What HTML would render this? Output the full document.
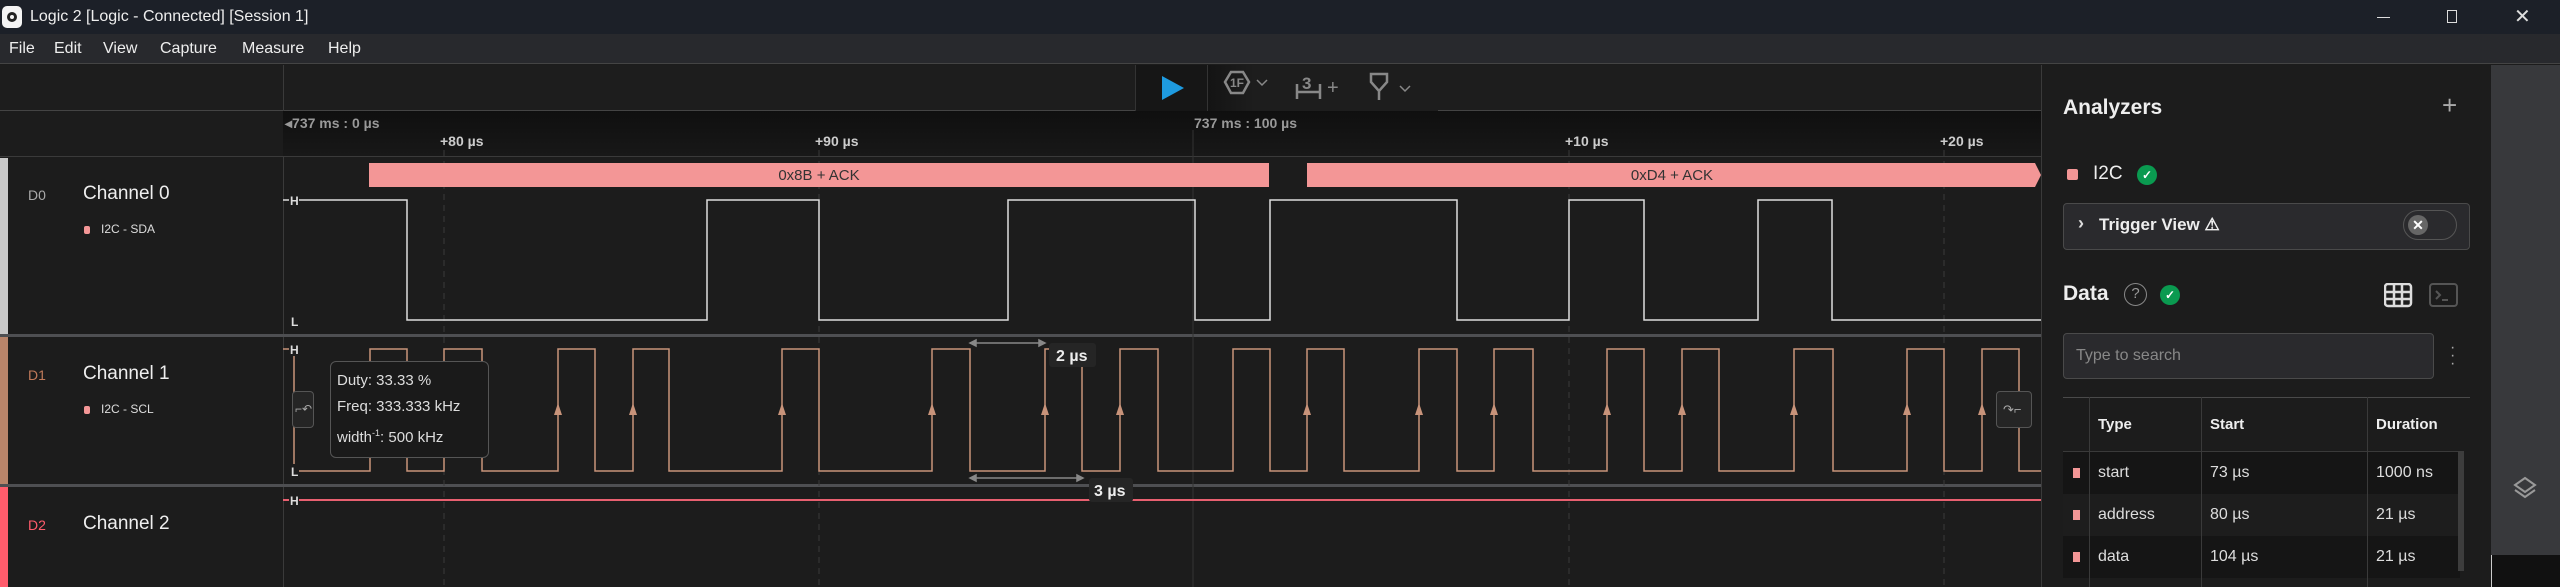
<!DOCTYPE html>
<html><head><meta charset="utf-8"><style>
*{margin:0;padding:0;box-sizing:border-box}
body{width:2560px;height:587px;overflow:hidden;background:#1c1c1c;font-family:"Liberation Sans",sans-serif;color:#ddd;position:relative}
.a{position:absolute;white-space:nowrap}
</style></head><body>
<!-- title bar -->
<div class="a" style="left:0;top:0;width:2560px;height:34px;background:#1c2028"></div>
<div class="a" style="left:2px;top:6px;width:20px;height:22px;background:#f4f4f4;border-radius:5px"></div>
<div class="a" style="left:7px;top:12px;width:10px;height:10px;border:3px solid #222;border-radius:50%"></div>
<div class="a" style="left:30px;top:8px;font-size:16px;color:#eee">Logic 2 [Logic - Connected] [Session 1]</div>
<div class="a" style="left:2377px;top:17px;width:13px;height:1px;background:#ddd"></div>
<div class="a" style="left:2447px;top:10px;width:10px;height:13px;border:1.5px solid #ddd"></div>
<div class="a" style="left:2514px;top:4px;font-size:20px;color:#ddd">✕</div>
<!-- menu -->
<div class="a" style="left:0;top:34px;width:2560px;height:30px;background:#28292d;border-bottom:1px solid #444"></div>
<div class="a" style="left:9px;top:40px;font-size:16px;color:#eee">File</div>
<div class="a" style="left:54px;top:40px;font-size:16px;color:#eee">Edit</div>
<div class="a" style="left:103px;top:40px;font-size:16px;color:#eee">View</div>
<div class="a" style="left:160px;top:40px;font-size:16px;color:#eee">Capture</div>
<div class="a" style="left:242px;top:40px;font-size:16px;color:#eee">Measure</div>
<div class="a" style="left:328px;top:40px;font-size:16px;color:#eee">Help</div>
<!-- toolbar -->
<div class="a" style="left:0;top:65px;width:2041px;height:46px;background:#1d1d1d;border-bottom:1px solid #444"></div>
<div class="a" style="left:283px;top:65px;width:1px;height:522px;background:#3a3a3a"></div>
<div class="a" style="left:1135px;top:65px;width:73px;height:46px;background:#161616;border-left:1px solid #333;border-right:1px solid #333"></div>
<div class="a" style="left:1208px;top:65px;width:230px;height:46px;background:linear-gradient(90deg,#141414,#1d1d1d 20%)"></div>
<!-- header -->
<div class="a" style="left:283px;top:111px;width:1758px;height:46px;background:linear-gradient(#0f0f0f,#181818);border-bottom:1px solid #3a3a3a"></div>
<div class="a" style="left:0;top:111px;width:283px;height:46px;background:#1c1c1c;border-bottom:1px solid #3a3a3a"></div>
<div class="a" style="left:285px;top:115px;font-size:14px;font-weight:bold;color:#999">◂737 ms : 0 µs</div>
<div class="a" style="left:1194px;top:115px;font-size:14px;font-weight:bold;color:#999">737 ms : 100 µs</div>
<div class="a" style="left:440px;top:133px;font-size:14px;font-weight:bold;color:#ccc">+80 µs</div>
<div class="a" style="left:815px;top:133px;font-size:14px;font-weight:bold;color:#ccc">+90 µs</div>
<div class="a" style="left:1565px;top:133px;font-size:14px;font-weight:bold;color:#ccc">+10 µs</div>
<div class="a" style="left:1940px;top:133px;font-size:14px;font-weight:bold;color:#ccc">+20 µs</div>
<!-- row bars -->
<div class="a" style="left:0;top:158px;width:8px;height:177px;background:#c8c8c8"></div>
<div class="a" style="left:0;top:337px;width:8px;height:148px;background:#b8846a"></div>
<div class="a" style="left:0;top:487px;width:8px;height:100px;background:#ff5c6c"></div>
<div class="a" style="left:0;top:334px;width:2041px;height:3px;background:#4e4f52"></div>
<div class="a" style="left:0;top:484px;width:2041px;height:3px;background:#4e4f52"></div>
<div class="a" style="left:28px;top:187px;font-size:14px;color:#aaa">D0</div>
<div class="a" style="left:83px;top:183px;font-size:19px;color:#eee">Channel 0</div>
<div class="a" style="left:84px;top:226px;width:6px;height:8px;background:#f39696;border-radius:2px"></div>
<div class="a" style="left:101px;top:222px;font-size:12px;color:#ddd">I2C - SDA</div>
<div class="a" style="left:28px;top:367px;font-size:14px;color:#c07a5a">D1</div>
<div class="a" style="left:83px;top:363px;font-size:19px;color:#eee">Channel 1</div>
<div class="a" style="left:84px;top:406px;width:6px;height:8px;background:#f39696;border-radius:2px"></div>
<div class="a" style="left:101px;top:402px;font-size:12px;color:#ddd">I2C - SCL</div>
<div class="a" style="left:28px;top:517px;font-size:14px;color:#ff5c6c">D2</div>
<div class="a" style="left:83px;top:513px;font-size:19px;color:#eee">Channel 2</div>
<!-- waveform svg -->
<svg class="a" style="left:0;top:0" width="2560" height="587">
<g stroke="#3a3a3a" stroke-dasharray="6,5" stroke-width="1">
<line x1="444" y1="150" x2="444" y2="587"/><line x1="819" y1="150" x2="819" y2="587"/>
<line x1="1569" y1="150" x2="1569" y2="587"/><line x1="1944" y1="150" x2="1944" y2="587"/></g>
<line x1="1193" y1="130" x2="1193" y2="587" stroke="#333" stroke-width="1"/>
<!-- toolbar icons -->
<polygon points="1162,76 1184,88 1162,100" fill="#1e9be0"/>
<polygon points="1225,82 1231,72 1243,72 1249,82 1243,93 1231,93" fill="none" stroke="#888" stroke-width="2.5"/>
<text x="1230" y="87" font-size="12" fill="#888" font-family="Liberation Sans" font-weight="bold">1F</text>
<polyline points="1257,80 1262,85 1267,80" fill="none" stroke="#888" stroke-width="1.5"/>
<path d="M1297,84 V99 M1297,92 H1320 M1320,84 V99" stroke="#888" stroke-width="2.5" fill="none"/>
<text x="1302" y="89" font-size="17" fill="#888" font-family="Liberation Sans" font-weight="bold">3</text>
<text x="1327" y="94" font-size="20" fill="#888" font-family="Liberation Sans">+</text>
<path d="M1371,74 H1387 V82 L1379,91 L1371,82 Z M1379,91 V100" stroke="#888" stroke-width="2.5" fill="none"/>
<polyline points="1400,86 1405,91 1410,86" fill="none" stroke="#888" stroke-width="1.5"/>
<!-- decode bars -->
<rect x="369" y="163" width="900" height="24" fill="#f39696"/>
<polygon points="1307,163 2035,163 2041,175 2035,187 1307,187" fill="#f39696"/>
<text x="819" y="180" font-size="15" fill="#333" text-anchor="middle" font-family="Liberation Sans">0x8B + ACK</text>
<text x="1672" y="180" font-size="15" fill="#333" text-anchor="middle" font-family="Liberation Sans">0xD4 + ACK</text>
<!-- SDA -->
<path d="M283,200 H407 V320 H707 V200 H819 V320 H1008 V200 H1195 V320 H1270 V200 H1457 V320 H1569 V200 H1644 V320 H1758 V200 H1832 V320 H2041" fill="none" stroke="#ddd" stroke-width="1.5"/>
<!-- SCL -->
<path d="M283,349 H294 V471 H370 V349 H407 V471 H444 V349 H482 V471 H558 V349 H595 V471 H633 V349 H669 V471 H782 V349 H819 V471 H932 V349 H970 V471 H1045 V349 H1082 V471 H1120 V349 H1158 V471 H1233 V349 H1270 V471 H1307 V349 H1344 V471 H1419 V349 H1457 V471 H1494 V349 H1533 V471 H1607 V349 H1644 V471 H1682 V349 H1719 V471 H1794 V349 H1833 V471 H1907 V349 H1944 V471 H1982 V349 H2019 V471 H2041" fill="none" stroke="#c8937a" stroke-width="1.5"/>
<g fill="#c8937a">
<polygon points="558,403 554,415 562,415"/><polygon points="633,403 629,415 637,415"/><polygon points="782,403 778,415 786,415"/><polygon points="932,403 928,415 936,415"/><polygon points="1045,403 1041,415 1049,415"/><polygon points="1120,403 1116,415 1124,415"/><polygon points="1307,403 1303,415 1311,415"/><polygon points="1419,403 1415,415 1423,415"/><polygon points="1494,403 1490,415 1498,415"/><polygon points="1607,403 1603,415 1611,415"/><polygon points="1682,403 1678,415 1686,415"/><polygon points="1794,403 1790,415 1798,415"/><polygon points="1907,403 1903,415 1911,415"/><polygon points="1982,403 1978,415 1986,415"/></g>
<!-- D2 -->
<line x1="283" y1="500" x2="2041" y2="500" stroke="#e86070" stroke-width="2"/>
<g font-family="Liberation Sans" font-size="12" font-weight="bold" fill="#ddd">
<rect x="289" y="193" width="10" height="14" fill="#1c1c1c"/><text x="290" y="205">H</text>
<rect x="289" y="314" width="10" height="14" fill="#1c1c1c"/><text x="291" y="326">L</text>
<rect x="289" y="342" width="10" height="14" fill="#1c1c1c"/><text x="290" y="354">H</text>
<rect x="289" y="464" width="10" height="14" fill="#1c1c1c"/><text x="291" y="476">L</text>
<rect x="289" y="493" width="10" height="14" fill="#1c1c1c"/><text x="290" y="505">H</text></g>
<!-- measurements -->
<g stroke="#888" stroke-width="1.5" fill="#888">
<line x1="970" y1="343" x2="1045" y2="343"/><polygon points="970,343 976,340 976,346"/><polygon points="1045,343 1039,340 1039,346"/>
<line x1="970" y1="478" x2="1083" y2="478"/><polygon points="970,478 976,475 976,481"/><polygon points="1083,478 1077,475 1077,481"/></g>
<rect x="1049" y="343" width="47" height="24" rx="3" fill="#252525"/>
<text x="1056" y="361" font-size="16" font-weight="bold" fill="#eee" font-family="Liberation Sans">2 µs</text>
<rect x="1089" y="478" width="44" height="24" rx="3" fill="#252525"/>
<text x="1094" y="496" font-size="16" font-weight="bold" fill="#eee" font-family="Liberation Sans">3 µs</text>
</svg>
<!-- tooltip -->
<div class="a" style="left:292px;top:391px;width:22px;height:37px;background:#252525;border:1px solid #555;border-radius:4px;color:#aaa;font-size:12px;padding:10px 2px">⌐↶</div>
<div class="a" style="left:330px;top:361px;width:159px;height:97px;background:#1a1a1a;border:1px solid #555;border-radius:6px;padding:6px 6px;font-size:15px;color:#ddd;line-height:26px">Duty: 33.33 %<br>Freq: 333.333 kHz<br>width<sup style="font-size:9px">-1</sup>: 500 kHz</div>
<div class="a" style="left:1996px;top:391px;width:36px;height:37px;background:#252525;border:1px solid #555;border-radius:4px;color:#aaa;font-size:13px;padding:10px 6px">↷⌐</div>
<!-- right panel -->
<div class="a" style="left:2041px;top:65px;width:450px;height:522px;background:#1c1c1c;border-left:1px solid #3a3a3a"></div>
<div class="a" style="left:2491px;top:65px;width:69px;height:490px;background:#38393c"></div>
<div class="a" style="left:2491px;top:555px;width:69px;height:32px;background:#111;border-left:1px solid #ccc"></div>
<svg class="a" style="left:2512px;top:475px" width="26" height="26"><path d="M13,3 L23,10 L13,17 L3,10 Z M3,15 L13,22 L23,15" fill="none" stroke="#999" stroke-width="2"/></svg>
<div class="a" style="left:2063px;top:96px;font-size:21px;font-weight:bold;color:#eee">Analyzers</div>
<div class="a" style="left:2442px;top:90px;font-size:26px;color:#aaa">+</div>
<div class="a" style="left:2067px;top:169px;width:11px;height:11px;background:#f39696;border-radius:2px"></div>
<div class="a" style="left:2093px;top:163px;font-size:19px;color:#eee">I2C</div>
<div class="a" style="left:2137px;top:165px;width:20px;height:20px;background:#0a9a50;border-radius:50%;color:#fff;font-size:12px;text-align:center;line-height:20px;font-weight:bold">✓</div>
<div class="a" style="left:2063px;top:203px;width:407px;height:47px;background:#2a2a2d;border:1px solid #4a4a4a;border-radius:4px"></div>
<div class="a" style="left:2078px;top:213px;font-size:18px;color:#ddd;font-weight:bold">›</div>
<div class="a" style="left:2099px;top:215px;font-size:17px;font-weight:bold;color:#eee">Trigger View ⚠</div>
<div class="a" style="left:2403px;top:210px;width:54px;height:30px;border:1px solid #555;border-radius:15px"></div>
<div class="a" style="left:2408px;top:215px;width:20px;height:20px;background:#666;border-radius:50%;color:#fff;font-size:14px;text-align:center;line-height:20px;font-weight:bold">✕</div>
<div class="a" style="left:2063px;top:282px;font-size:21px;font-weight:bold;color:#eee">Data</div>
<div class="a" style="left:2124px;top:283px;width:23px;height:23px;border:1.5px solid #888;border-radius:50%;color:#999;font-size:15px;text-align:center;line-height:20px">?</div>
<div class="a" style="left:2160px;top:285px;width:20px;height:20px;background:#0a9a50;border-radius:50%;color:#fff;font-size:12px;text-align:center;line-height:20px;font-weight:bold">✓</div>
<svg class="a" style="left:2384px;top:283px" width="74" height="26"><rect x="1" y="1" width="26" height="22" rx="3" fill="none" stroke="#ddd" stroke-width="2.5"/><path d="M1,9 H27 M1,16 H27 M10,1 V23 M18,1 V23" stroke="#ddd" stroke-width="2.5"/><rect x="46" y="1" width="27" height="22" rx="3" fill="none" stroke="#555" stroke-width="2"/><path d="M52,8 L56,12 L52,16 M58,17 H64" stroke="#555" stroke-width="2" fill="none"/></svg>
<div class="a" style="left:2063px;top:333px;width:371px;height:46px;background:#2a2a2d;border:1px solid #4a4a4a;border-radius:4px;padding:13px 12px;font-size:16px;color:#888">Type to search</div>
<div class="a" style="left:2450px;top:344px;font-size:16px;color:#aaa;line-height:8px">·<br>·<br>·</div>
<div class="a" style="left:2063px;top:397px;width:407px;height:190px;border-top:1px solid #4a4a4a"></div>
<div class="a" style="left:2063px;top:451px;width:397px;height:43px;background:#151515;border-top:1px solid #3a3a3a"></div>
<div class="a" style="left:2063px;top:494px;width:397px;height:42px;background:#1d1d1d"></div>
<div class="a" style="left:2063px;top:536px;width:397px;height:42px;background:#151515"></div>
<div class="a" style="left:2089px;top:397px;width:1px;height:190px;background:#3a3a3a"></div>
<div class="a" style="left:2201px;top:397px;width:1px;height:190px;background:#3a3a3a"></div>
<div class="a" style="left:2367px;top:397px;width:1px;height:190px;background:#3a3a3a"></div>
<div class="a" style="left:2458px;top:451px;width:6px;height:120px;background:#3d3d3d"></div>
<div class="a" style="left:2098px;top:416px;font-size:15px;font-weight:bold;color:#eee">Type</div>
<div class="a" style="left:2210px;top:416px;font-size:15px;font-weight:bold;color:#eee">Start</div>
<div class="a" style="left:2376px;top:416px;font-size:15px;font-weight:bold;color:#eee">Duration</div>
<div class="a" style="left:2073px;top:468px;width:7px;height:10px;background:#f39696"></div>
<div class="a" style="left:2073px;top:510px;width:7px;height:10px;background:#f39696"></div>
<div class="a" style="left:2073px;top:552px;width:7px;height:10px;background:#f39696"></div>
<div class="a" style="left:2098px;top:464px;font-size:16px;color:#ddd">start</div>
<div class="a" style="left:2210px;top:464px;font-size:16px;color:#ddd">73 µs</div>
<div class="a" style="left:2376px;top:464px;font-size:16px;color:#ddd">1000 ns</div>
<div class="a" style="left:2098px;top:506px;font-size:16px;color:#ddd">address</div>
<div class="a" style="left:2210px;top:506px;font-size:16px;color:#ddd">80 µs</div>
<div class="a" style="left:2376px;top:506px;font-size:16px;color:#ddd">21 µs</div>
<div class="a" style="left:2098px;top:548px;font-size:16px;color:#ddd">data</div>
<div class="a" style="left:2210px;top:548px;font-size:16px;color:#ddd">104 µs</div>
<div class="a" style="left:2376px;top:548px;font-size:16px;color:#ddd">21 µs</div>
</body></html>
